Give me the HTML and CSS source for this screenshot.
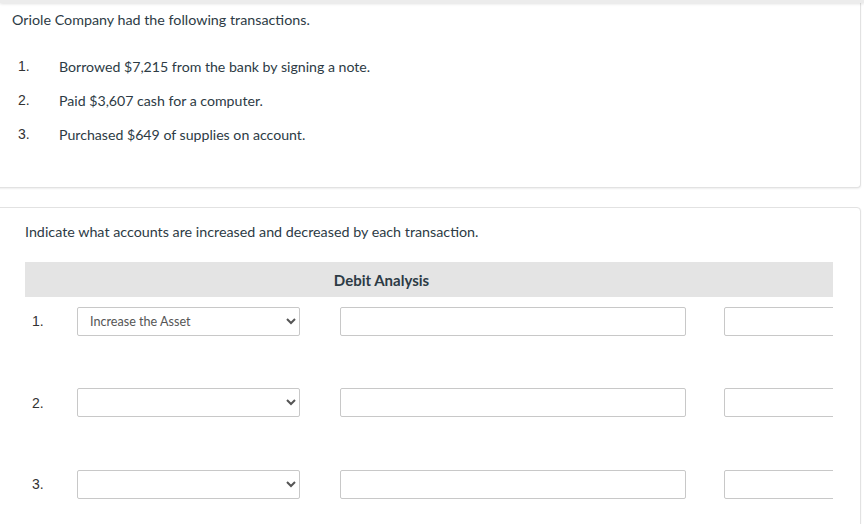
FILE: index.html
```html
<!DOCTYPE html>
<html>
<head>
<meta charset="utf-8">
<link rel="stylesheet" href="styles.css">
</head>
<body>
<div class="topbar"></div>
<section class="card card-intro">
  <p class="lead">Oriole Company had the following transactions.</p>
  <ol class="tx-list">
    <li><span class="num">1.</span><span>Borrowed $7,215 from the bank by signing a note.</span></li>
    <li><span class="num">2.</span><span>Paid $3,607 cash for a computer.</span></li>
    <li><span class="num">3.</span><span>Purchased $649 of supplies on account.</span></li>
  </ol>
</section>
<section class="card card-work">
  <p class="lead">Indicate what accounts are increased and decreased by each transaction.</p>
  <div class="table">
    <div class="thead">
      <div class="th-spacer"></div>
      <div class="th-title">Debit Analysis</div>
    </div>
    <div class="row">
      <span class="rnum">1.</span>
      <select class="sel"><option>Increase the Asset</option></select>
      <input class="inp" type="text">
      <input class="inp inp-clip" type="text">
    </div>
    <div class="row">
      <span class="rnum">2.</span>
      <select class="sel"><option></option></select>
      <input class="inp" type="text">
      <input class="inp inp-clip" type="text">
    </div>
    <div class="row">
      <span class="rnum">3.</span>
      <select class="sel"><option></option></select>
      <input class="inp" type="text">
      <input class="inp inp-clip" type="text">
    </div>
  </div>
</section>
</body>
</html>
```
FILE: styles.css
```css
html, body {
  margin: 0;
  padding: 0;
  background: #ffffff;
  overflow: hidden;
}
body {
  font-family: Lato, "Open Sans", sans-serif;
  font-size: 14px;
  color: #2d3b45;
  width: 864px;
  height: 524px;
}
.topbar {
  height: 3px;
  background: #ececec;
  box-shadow: 0 1px 3px rgba(0, 0, 0, 0.12);
  position: relative;
  z-index: 2;
}
.card {
  margin-left: -10px;
  width: 871px;
  box-sizing: border-box;
  background: #fff;
  border: 1px solid #e2e2e2;
  border-radius: 4px;
  box-shadow: 0 1px 2px rgba(0, 0, 0, 0.07);
}
.card-intro {
  border-top: none;
  border-top-left-radius: 0;
  border-top-right-radius: 0;
  padding: 7px 0 34px 21px;
  height: 185px;
}
.lead {
  margin: 0;
  line-height: 20px;
  font-size: 14.3px;
}
.tx-list {
  list-style: none;
  margin: 19px 0 0;
  padding: 0;
  font-size: 14.15px;
}
.tx-list li {
  display: flex;
  height: 34px;
  align-items: center;
}
.tx-list .num {
  font-family: "Liberation Sans", Arial, sans-serif;
  font-size: 14px;
  width: 47px;
  padding-left: 6px;
  box-sizing: border-box;
  color: #333;
}
.card-work {
  margin-top: 19px;
  padding: 14px 0 0 34px;
  height: 340px;
}
.table {
  margin-top: 20px;
  width: 808px;
  overflow: hidden;
}
.thead {
  display: flex;
  height: 35px;
  align-items: center;
  background: #e4e4e4;
}
.th-spacer {
  width: 52px;
}
.th-title {
  width: 609px;
  text-align: center;
  font-weight: 700;
  font-size: 15px;
}
.row {
  display: flex;
  align-items: center;
  height: 29px;
  padding-top: 9.5px;
  margin-bottom: 43px;
  white-space: nowrap;
}
.rnum {
  font-family: "Liberation Sans", Arial, sans-serif;
  color: #333;
  width: 52px;
  padding-left: 7px;
  box-sizing: border-box;
  flex: none;
}
.sel {
  flex: none;
  width: 223px;
  height: 29px;
  box-sizing: border-box;
  border: 1px solid #c8c8c8;
  border-radius: 2px;
  background: #fff;
  font-family: Lato, sans-serif;
  font-size: 12.6px;
  color: #555;
  padding: 0 8px;
  margin: 0;
}
.inp {
  flex: none;
  width: 346px;
  height: 29px;
  box-sizing: border-box;
  border: 1px solid #c8c8c8;
  border-radius: 2px;
  background: #fff;
  margin: 0 0 0 40px;
  padding: 0;
}
.inp-clip {
  margin-left: 38px;
  width: 200px;
}
```
